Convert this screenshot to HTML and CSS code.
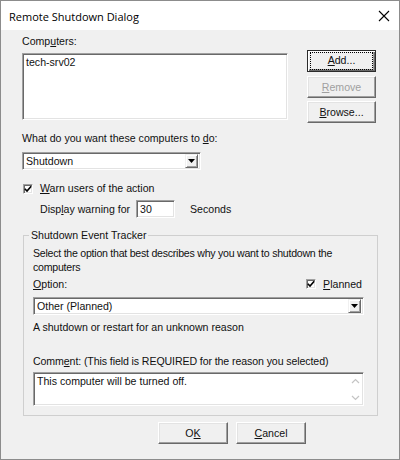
FILE: index.html
```html
<!DOCTYPE html>
<html>
<head>
<meta charset="utf-8">
<link rel="stylesheet" href="styles.css">
</head>
<body>
<div class="window">
  <div class="titlebar">
    <span class="title">Remote Shutdown Dialog</span>
    <svg class="close" width="12" height="12" viewBox="0 0 12 12"><path d="M1 1 L11 11 M11 1 L1 11" stroke="#000" stroke-width="1.1" fill="none"/></svg>
  </div>
  <div class="body">
    <div class="computers">
      <div class="left">
        <div class="label">Comp<u>u</u>ters:</div>
        <div class="listbox sunken"><span class="item">tech-srv02</span></div>
      </div>
      <div class="btns">
        <div class="btn default"><span class="focus"><u>A</u>dd...</span></div>
        <div class="btn disabled gap4"><u>R</u>emove</div>
        <div class="btn gap3"><u>B</u>rowse...</div>
      </div>
    </div>

    <div class="label what">What do you want these computers to <u>d</u>o:</div>
    <div class="combo action sunken">
      <span class="combo-text">Shutdown</span>
      <span class="arrow"><svg width="7" height="4" viewBox="0 0 7 4"><path d="M0 0 H7 L3.5 4 Z" fill="#000"/></svg></span>
    </div>

    <div class="check warn">
      <span class="box sunken"><svg width="8" height="8" viewBox="0 0 8 8"><path d="M0.8 3.8 L3 6 L7.2 1.2" stroke="#000" stroke-width="1.6" fill="none"/></svg></span>
      <span class="check-label"><u>W</u>arn users of the action</span>
    </div>

    <div class="warnrow">
      <span class="lbl">Disp<u>l</u>ay warning for</span>
      <div class="field sunken">30</div>
      <span class="secs">Seconds</span>
    </div>

    <fieldset class="group">
      <legend>Shutdown Event Tracker</legend>
      <div class="desc">Select the option that best describes why you want to shutdown the<br>computers</div>
      <div class="optrow">
        <span><u>O</u>ption:</span>
        <span class="check planned">
          <span class="box sunken"><svg width="8" height="8" viewBox="0 0 8 8"><path d="M0.8 3.8 L3 6 L7.2 1.2" stroke="#000" stroke-width="1.6" fill="none"/></svg></span>
          <span class="check-label"><u>P</u>lanned</span>
        </span>
      </div>
      <div class="combo reason sunken">
        <span class="combo-text">Other (Planned)</span>
        <span class="arrow"><svg width="7" height="4" viewBox="0 0 7 4"><path d="M0 0 H7 L3.5 4 Z" fill="#000"/></svg></span>
      </div>
      <div class="reason-desc">A shutdown or restart for an unknown reason</div>
      <div class="comment-label">Comm<u>e</u>nt: (This field is REQUIRED for the reason you selected)</div>
      <div class="memo sunken">
        <span class="memo-text">This computer will be turned off.</span>
        <span class="vscroll">
          <svg width="9" height="6" viewBox="0 0 9 6"><path d="M1 5 L4.5 1.5 L8 5" stroke="#c4c4c4" stroke-width="1.2" fill="none"/></svg>
          <svg width="9" height="6" viewBox="0 0 9 6"><path d="M1 1 L4.5 4.5 L8 1" stroke="#c4c4c4" stroke-width="1.2" fill="none"/></svg>
        </span>
      </div>
    </fieldset>

    <div class="actions">
      <div class="btn wide">O<u>K</u></div>
      <div class="btn wide"><u>C</u>ancel</div>
    </div>
  </div>
</div>
</body>
</html>
```

FILE: styles.css
```css
* { box-sizing: border-box; }
html, body { margin: 0; padding: 0; background: #ffffff; }
body { font-family: "Liberation Sans", Arial, sans-serif; font-size: 10.6px; color: #111; }

.window {
  width: 400px;
  height: 460px;
  border: 1px solid #8c8c8c;
  background: #f0f0f0;
  display: flex;
  flex-direction: column;
  overflow: hidden;
}

.titlebar {
  height: 29px;
  background: #ffffff;
  display: flex;
  align-items: center;
  justify-content: space-between;
  padding: 0 9px 0 8px;
  flex: none;
}
.title {
  font-family: "Open Sans", "Noto Sans", sans-serif;
  font-size: 11px;
  color: #000;
  margin-top: 1px;
}
.close { margin-top: 1px; }

.body {
  padding: 5px 0 0 21px;
  display: flex;
  flex-direction: column;
  align-items: flex-start;
}

.label { line-height: 13px; height: 13px; white-space: nowrap; }

.sunken {
  border: 1px solid;
  border-color: #a0a0a0 #ffffff #ffffff #a0a0a0;
  box-shadow: inset 1px 1px 0 #696969, inset -1px -1px 0 #e3e3e3;
  background: #ffffff;
}

.computers { display: flex; align-items: flex-start; }
.left { width: 266px; }
.listbox {
  margin-top: 5px;
  height: 67px;
  width: 266px;
  padding: 2px 3px;
  line-height: 13px;
}

.btns { margin-left: 19px; margin-top: 15px; display: flex; flex-direction: column; }
.btn {
  width: 69px;
  height: 22px;
  display: flex;
  align-items: center;
  justify-content: center;
  background: #f0f0f0;
  border: 1px solid;
  border-color: #ffffff #696969 #696969 #ffffff;
  box-shadow: inset -1px -1px 0 #a0a0a0, inset 1px 1px 0 #e3e3e3;
  line-height: 13px;
}
.btn.default {
  border: 1px solid #2b2b2b;
  box-shadow: inset 1px 1px 0 #ffffff, inset -1px -1px 0 #696969, inset -2px -2px 0 #a0a0a0;
}
.focus {
  display: flex;
  align-items: center;
  justify-content: center;
  width: 61px;
  height: 16px;
  outline: 1px dotted #000;
  margin-top: -1px;
}
.btn.disabled { color: #a0a0a0; }
.gap4 { margin-top: 4px; }
.gap3 { margin-top: 3px; }

.what { margin-top: 9px; }

.combo {
  display: flex;
  align-items: center;
  justify-content: space-between;
  height: 18px;
  line-height: 13px;
  padding: 0 2px 0 3px;
}
.action { margin-top: 7px; width: 179px; }
.arrow {
  width: 13px;
  height: 14px;
  display: flex;
  align-items: center;
  justify-content: center;
  background: #f0f0f0;
  border: 1px solid;
  border-color: #f0f0f0 #696969 #696969 #f0f0f0;
  box-shadow: inset 1px 1px 0 #ffffff, inset -1px -1px 0 #a0a0a0;
}

.check { display: flex; align-items: center; line-height: 13px; }
.box {
  width: 10px;
  height: 10px;
  display: flex;
  align-items: center;
  justify-content: center;
  flex: none;
}
.warn { margin-top: 12px; margin-left: 1px; }
.warn .check-label { margin-left: 7px; }

.warnrow { display: flex; align-items: center; margin-top: 5px; margin-left: 18px; height: 18px; }
.lbl { width: 96px; white-space: nowrap; }
.field {
  width: 39px;
  height: 18px;
  padding: 1px 3px;
  line-height: 14px;
}
.secs { margin-left: 15px; }

.group {
  margin: 11px 0 0 1px;
  width: 355px;
  border: 1px solid #cfcfcf;
  padding: 4px 13px 9px 9px;
  min-inline-size: 0;
}
.group legend {
  padding: 0 2px;
  margin-left: -4px;
  line-height: 13px;
}
.desc { line-height: 14px; white-space: nowrap; letter-spacing: -0.25px; }
.optrow {
  margin-top: 3px;
  height: 14px;
  display: flex;
  align-items: center;
  justify-content: space-between;
  line-height: 13px;
}
.planned { margin-right: 2px; }
.planned .check-label { margin-left: 7px; }
.reason { margin-top: 6px; width: 331px; }
.reason-desc { margin-top: 6px; line-height: 13px; }
.comment-label { margin-top: 21px; line-height: 13px; letter-spacing: -0.1px; }
.memo {
  margin-top: 4px;
  height: 34px;
  width: 331px;
  display: flex;
  justify-content: space-between;
  padding: 2px 2px 2px 3px;
  line-height: 13px;
}
.vscroll {
  width: 12px;
  display: flex;
  flex-direction: column;
  align-items: center;
  justify-content: space-between;
  padding: 3px 0 2px;
}

.actions {
  margin-top: 6px;
  margin-left: 136px;
  display: flex;
  gap: 8px;
}
.btn.wide { width: 70px; height: 22px; }
```
